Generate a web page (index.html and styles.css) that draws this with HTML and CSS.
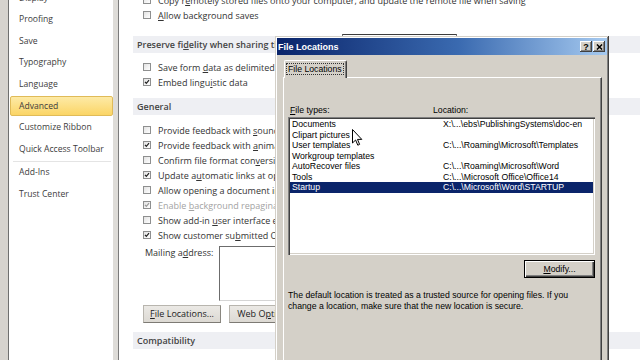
FILE: index.html
```html
<!DOCTYPE html>
<html lang="en">
<head>
    <meta charset="UTF-8">
    <meta name="viewport" content="width=device-width, initial-scale=1.0">
    <title>Word Options - Advanced</title>
    <link rel="stylesheet" href="styles.css">
</head>
<body>
    <div class="options">
        <div class="frame"></div>
        <div class="nav">
            <div class="nav-list">
                <div class="nav-item">Display</div>
                <div class="nav-item">Proofing</div>
                <div class="nav-item">Save</div>
                <div class="nav-item">Typography</div>
                <div class="nav-item">Language</div>
                <div class="nav-item active">Advanced</div>
                <div class="nav-item">Customize Ribbon</div>
                <div class="nav-item">Quick Access Toolbar</div>
                <div class="nav-sep"></div>
                <div class="nav-item">Add-Ins</div>
                <div class="nav-item">Trust Center</div>
            </div>
        </div>
        <div class="nav-edge"></div>

        <div class="content">
            <div class="row first"><span class="cb"></span><span>Copy r<u>e</u>motely stored files onto your computer, and update the remote file when saving</span></div>
            <div class="row"><span class="cb"></span><span><u>A</u>llow background saves</span></div>

            <div class="band band-fidelity">
                <span class="band-label">Preserve fi<u>d</u>elity when sharing this document:</span>
                <span class="combo"></span>
            </div>
            <div class="row after-band"><span class="cb"></span><span>Save form <u>d</u>ata as delimited text file</span></div>
            <div class="row"><span class="cb on"><svg viewBox="0 0 8 8"><path d="M1.3 3.8 L3.1 5.7 L6.7 1.6"/></svg></span><span>Embed lingu<u>i</u>stic data</span></div>

            <div class="band band-general">General</div>
            <div class="row after-band"><span class="cb"></span><span>Provide feedback with <u>s</u>ound</span></div>
            <div class="row"><span class="cb on"><svg viewBox="0 0 8 8"><path d="M1.3 3.8 L3.1 5.7 L6.7 1.6"/></svg></span><span>Provide feedback with <u>a</u>nimation</span></div>
            <div class="row"><span class="cb"></span><span>Confirm file format con<u>v</u>ersion on open</span></div>
            <div class="row"><span class="cb on"><svg viewBox="0 0 8 8"><path d="M1.3 3.8 L3.1 5.7 L6.7 1.6"/></svg></span><span>Update a<u>u</u>tomatic links at open</span></div>
            <div class="row"><span class="cb"></span><span>Allow opening a document in Draft view</span></div>
            <div class="row disabled"><span class="cb on"><svg viewBox="0 0 8 8"><path d="M1.3 3.8 L3.1 5.7 L6.7 1.6"/></svg></span><span>Enable <u>b</u>ackground repagination</span></div>
            <div class="row"><span class="cb"></span><span>Show add-in <u>u</u>ser interface errors</span></div>
            <div class="row"><span class="cb on"><svg viewBox="0 0 8 8"><path d="M1.3 3.8 L3.1 5.7 L6.7 1.6"/></svg></span><span>Show customer su<u>b</u>mitted Office.com content</span></div>

            <div class="mail">
                <span class="mail-label">Mailing a<u>d</u>dress:</span>
                <div class="mail-box"></div>
            </div>
            <div class="btns">
                <span class="btn"><u>F</u>ile Locations...</span>
                <span class="btn">Web O<u>p</u>tions...</span>
            </div>

            <div class="band band-compat">Compatibility</div>
        </div>
    </div>

    <div class="dialog">
        <div class="titlebar">
            <span class="title">File Locations</span>
            <span class="capbtn">?</span>
            <span class="capbtn"><svg viewBox="0 0 8 7"><path d="M1 0.5 L7 6.5 M7 0.5 L1 6.5"/></svg></span>
        </div>
        <div class="dlg-body">
            <div class="tabs">
                <div class="tab"><span class="focus">File Locations</span></div>
            </div>
            <div class="panel">
                <div class="labels">
                    <span class="lbl-type"><u>F</u>ile types:</span>
                    <span>Location:</span>
                </div>
                <div class="list">
                    <div class="item"><span class="col">Documents</span><span>X:\...\ebs\PublishingSystems\doc-en</span></div>
                    <div class="item"><span class="col">Clipart pictures</span><span></span></div>
                    <div class="item"><span class="col">User templates</span><span>C:\...\Roaming\Microsoft\Templates</span></div>
                    <div class="item"><span class="col">Workgroup templates</span><span></span></div>
                    <div class="item"><span class="col">AutoRecover files</span><span>C:\...\Roaming\Microsoft\Word</span></div>
                    <div class="item"><span class="col">Tools</span><span>C:\...\Microsoft Office\Office14</span></div>
                    <div class="item selected"><span class="col">Startup</span><span>C:\...\Microsoft\Word\STARTUP</span></div>
                </div>
                <div class="modify-row">
                    <span class="dbtn"><u>M</u>odify...</span>
                </div>
                <p class="info">The default location is treated as a trusted source for opening files. If you<br>change a location, make sure that the new location is secure.</p>
            </div>
        </div>
    </div>

    <svg class="cursor" viewBox="0 0 11 18" width="11" height="18">
        <path d="M0.5 0.5 L0.5 14 L3.6 11 L5.8 16.2 L7.6 15.4 L5.5 10.4 L9.8 10.4 Z" fill="#fff" stroke="#000" stroke-width="1" stroke-linejoin="miter"/>
    </svg>
</body>
</html>
```

FILE: styles.css
```css
* {
    box-sizing: border-box;
}

body {
    margin: 0;
    width: 640px;
    height: 360px;
    overflow: hidden;
    position: relative;
    background-color: #fff;
    font-family: 'Open Sans', 'Noto Sans', sans-serif;
    font-size: 8.6px;
    color: #333;
}

u {
    text-decoration-thickness: 1px;
}

.options {
    display: flex;
    height: 360px;
}

.frame {
    width: 9px;
    background-color: #d6d3ce;
    border-right: 1px solid #6f6f6f;
}

.nav {
    width: 104px;
    background-color: #fff;
    overflow: hidden;
}

.nav-list {
    margin-top: -12.35px;
    padding-left: 1px;
}

.nav-item {
    height: 21.6px;
    line-height: 21.6px;
    padding-left: 9px;
    color: #3c3c3c;
    white-space: nowrap;
}

.nav-item.active {
    height: 20px;
    line-height: 18px;
    margin: 0.8px 0;
    padding-left: 8px;
    background: linear-gradient(#fdeaa6, #fbd566);
    border: 1px solid #e0bb58;
    border-radius: 2px;
}

.nav-sep {
    height: 1px;
    margin: 0.5px 2px 0.5px 3px;
    background-color: #e4e4e4;
}

.nav-edge {
    width: 6px;
    background-color: #dedcd8;
    border-right: 1px solid #7b7b7b;
}

.content {
    flex: 1;
    padding-left: 14px;
    overflow: hidden;
    font-size: 9px;
}

.row {
    display: flex;
    align-items: center;
    height: 15px;
    padding-left: 10px;
    white-space: nowrap;
}

.row.first {
    margin-top: -7.5px;
}

.row.after-band {
    margin-top: 6.5px;
}

.band-general + .row.after-band {
    margin-top: 7.5px;
}

.row.disabled {
    color: #a3a3a3;
}

.cb {
    flex: none;
    width: 8px;
    height: 8px;
    margin-right: 7px;
    border: 1px solid #8e8f8f;
    background: linear-gradient(135deg, #e2e2e2, #fff);
    display: flex;
}

.cb svg {
    width: 6px;
    height: 6px;
    fill: none;
    stroke: #222;
    stroke-width: 1.6;
}

.disabled .cb svg {
    stroke: #9a9a9a;
}

.band {
    display: flex;
    align-items: center;
    height: 17px;
    padding-left: 4px;
    background-color: #eeeff3;
    color: #444;
    font-weight: 600;
    white-space: nowrap;
}

.band-fidelity {
    margin-top: 13.5px;
}

.band-general {
    margin-top: 8.5px;
}

.band-compat {
    margin-top: 9px;
}

.band-label {
    width: 205px;
}

.combo {
    width: 115px;
    height: 20px;
    margin-top: -1px;
    border: 1px solid #7a7a7a;
    border-top-color: #3c3c3c;
    background-color: #fff;
}

.mail {
    display: flex;
    height: 55px;
    margin-top: 3.5px;
    padding-left: 12px;
}

.mail-label {
    width: 74px;
    line-height: 11px;
    padding-top: 1px;
    white-space: nowrap;
}

.mail-box {
    width: 300px;
    border: 1px solid #d5d5d5;
    border-top: 1px solid #6c6c6c;
    border-left: 1px solid #6c6c6c;
    background-color: #fff;
}

.btns {
    display: flex;
    gap: 8px;
    margin-top: 4px;
    padding-left: 10px;
}

.btn {
    width: 78px;
    height: 18px;
    line-height: 16px;
    text-align: center;
    background: linear-gradient(#ebe9e5, #dcd9d3);
    border: 1px solid #b8b5ae;
    border-right-color: #8a8780;
    border-bottom-color: #7d7a74;
    color: #222;
    white-space: nowrap;
}

/* File Locations dialog on top */
.dialog {
    position: absolute;
    left: 275px;
    top: 36px;
    width: 334px;
    height: 340px;
    padding: 2px;
    background-color: #d4d0c8;
    box-shadow: inset -1px -1px #404040, inset 1px 1px #d4d0c8, inset -2px -2px #808080, inset 2px 2px #fff;
    font-family: 'Liberation Sans', Arial, sans-serif;
    font-size: 8.7px;
    color: #000;
}

.titlebar {
    display: flex;
    align-items: center;
    height: 17px;
    padding: 0 2px 0 1px;
    background: linear-gradient(to right, #0a246a, #3a6ab0 55%, #a6caf0);
    color: #fff;
    font-size: 9px;
    font-weight: bold;
}

.title {
    flex: 1;
}

.capbtn {
    width: 12px;
    height: 11px;
    display: flex;
    align-items: center;
    justify-content: center;
    background-color: #d4d0c8;
    box-shadow: inset -1px -1px #404040, inset 1px 1px #fff, inset -2px -2px #808080;
    color: #000;
    font-size: 9px;
    font-weight: bold;
}

.capbtn + .capbtn {
    margin-left: 1px;
}

.capbtn svg {
    width: 7px;
    height: 6px;
    stroke: #000;
    stroke-width: 1.6;
}

.dlg-body {
    padding: 5px 5px 0 6px;
}

.tabs {
    display: flex;
    height: 17px;
}

.tab {
    position: relative;
    z-index: 1;
    width: 63px;
    height: 18px;
    margin-left: 1px;
    padding: 3px 0 0 2px;
    background-color: #d4d0c8;
    border-top: 1px solid #fff;
    border-left: 1px solid #fff;
    border-right: 1px solid #404040;
    border-radius: 2px 2px 0 0;
    box-shadow: inset -1px 0 #808080;
    white-space: nowrap;
}

.focus {
    padding: 0 1px;
    outline: 1px dotted #333;
}

.panel {
    height: 300px;
    padding: 27px 6px 0 4px;
    border-top: 1px solid #fff;
    border-left: 1px solid #fff;
    border-right: 1px solid #404040;
    box-shadow: inset -1px 0 #808080;
}

.labels {
    display: flex;
    height: 10px;
    line-height: 10px;
    margin-bottom: 2px;
}

.lbl-type {
    width: 145px;
    padding-left: 2px;
}

.list {
    height: 138px;
    padding: 2px;
    background-color: #fff;
    box-shadow: inset 1px 1px #808080, inset 2px 2px #404040, inset -1px -1px #fff, inset -2px -2px #d4d0c8;
}

.item {
    display: flex;
    height: 10.5px;
    line-height: 10.5px;
    padding-left: 2px;
    white-space: nowrap;
}

.item .col {
    width: 151px;
}

.item.selected {
    background-color: #0a246a;
    color: #fff;
}

.modify-row {
    display: flex;
    justify-content: flex-end;
    margin-top: 5px;
}

.dbtn {
    width: 71px;
    height: 18px;
    line-height: 16px;
    text-align: center;
    border: 1px solid #000;
    background-color: #d4d0c8;
    box-shadow: inset 1px 1px #fff, inset -1px -1px #404040, inset -2px -2px #808080;
}

.info {
    margin: 12px 0 0 0;
    line-height: 10.5px;
    white-space: nowrap;
}

.cursor {
    position: absolute;
    left: 352px;
    top: 129px;
}
```
